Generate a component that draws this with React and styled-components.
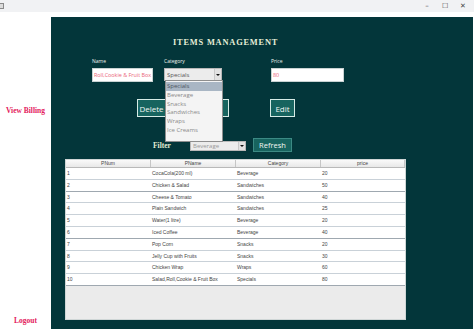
import React from 'react';
import styled, { createGlobalStyle } from 'styled-components';

const GlobalStyle = createGlobalStyle`
  * { box-sizing: border-box; }
  html, body { margin: 0; padding: 0; background: #fff; }
  body { width: 474px; height: 329px; overflow: hidden; font-family: "Open Sans", "Noto Sans", sans-serif; }
`;

const categories = ['Specials', 'Beverage', 'Snacks', 'Sandwiches', 'Wraps', 'Ice Creams'];

const items = [
  [1, 'CocaCola(200 ml)', 'Beverage', 20],
  [2, 'Chicken & Salad', 'Sandwiches', 50],
  [3, 'Cheese & Tomato', 'Sandwiches', 40],
  [4, 'Plain Sandwich', 'Sandwiches', 25],
  [5, 'Water(1 litre)', 'Beverage', 20],
  [6, 'Iced Coffee', 'Beverage', 40],
  [7, 'Pop Corn', 'Snacks', 20],
  [8, 'Jelly Cup with Fruits', 'Snacks', 30],
  [9, 'Chicken Wrap', 'Wraps', 60],
  [10, 'Salad,Roll,Cookie & Fruit Box', 'Specials', 80],
];

// Window frame
const Window = styled.div`
  width: 474px;
  height: 329px;
  display: flex;
  flex-direction: column;
`;

const TitleBar = styled.div`
  height: 12px;
  background: #f1f2f4;
  display: flex;
  align-items: center;
  justify-content: space-between;
  padding-right: 8px;
`;

const AppIcon = styled.div`
  width: 4px;
  height: 6px;
  border: 1px solid #8a8a8a;
  border-left: none;
  background: #dcdcdc;
`;

const Controls = styled.div`
  display: flex;
  gap: 12px;
  align-items: center;
  color: #444;
  font-family: "DejaVu Sans", sans-serif;
  font-size: 7px;
`;

const Control = styled.span`
  width: 6px;
  text-align: center;
`;

const Body = styled.div`
  flex: 1;
  display: flex;
  padding-top: 5px;
  padding-right: 1px;
  min-height: 0;
`;

const Sidebar = styled.div`
  width: 51px;
  display: flex;
  flex-direction: column;
  align-items: center;
`;

const SideLink = styled.div`
  font-family: "Liberation Serif", serif;
  font-weight: bold;
  font-size: 7.5px;
  color: #e3205c;
  margin-top: ${(p) => p.$top}px;
  white-space: nowrap;
`;

const Panel = styled.div`
  flex: 1;
  background: #03363a;
  display: flex;
  flex-direction: column;
  padding-top: 21px;
`;

const Title = styled.div`
  height: 10px;
  padding-left: 122px;
  font-family: "Liberation Serif", serif;
  font-weight: bold;
  font-size: 8.4px;
  letter-spacing: 0.8px;
  line-height: 10px;
  color: #e6eed8;
  white-space: nowrap;
`;

const FormRow = styled.div`
  display: flex;
  margin-top: 10px;
  padding-left: 41px;
`;

const Field = styled.div`
  width: ${(p) => p.$w}px;
  margin-right: ${(p) => p.$gap || 0}px;
  position: relative;
`;

const Label = styled.div`
  height: 7px;
  font-size: 5px;
  line-height: 7px;
  color: #eef2ee;
  margin-bottom: 3px;
`;

const TextInput = styled.div`
  height: 14px;
  background: #fff;
  border: 1px solid #c9d3d3;
  font-size: 5.4px;
  line-height: 12px;
  color: #ea6378;
  padding-left: 1px;
  white-space: nowrap;
  overflow: hidden;
`;

const Combo = styled.div`
  height: ${(p) => p.$h || 13}px;
  margin-top: ${(p) => p.$mt || 0}px;
  width: ${(p) => p.$w || 58}px;
  background: #ececec;
  border: 1px solid #b8b8b8;
  display: flex;
  align-items: center;
  font-size: 6px;
  color: ${(p) => p.$faint ? '#9a9a9a' : '#555'};
  padding-left: 2px;
  position: relative;
`;

const ComboText = styled.span`
  flex: 1;
  white-space: nowrap;
  overflow: hidden;
`;

const Arrow = styled.div`
  width: 7px;
  height: 100%;
  border-left: 1px solid #c8c8c8;
  background: #e2e2e2;
  display: flex;
  align-items: center;
  justify-content: center;
  &::after {
    content: '';
    border-left: 2px solid transparent;
    border-right: 2px solid transparent;
    border-top: 2.5px solid #111;
  }
`;

const DropList = styled.div`
  position: absolute;
  left: 0;
  top: 100%;
  width: 58px;
  height: 62px;
  background: #f4f4f4;
  border: 1px solid #8e8e8e;
  z-index: 5;
  padding-top: 1px;
`;

const DropItem = styled.div`
  height: 8.8px;
  line-height: 8.8px;
  font-size: 6px;
  padding-left: 1px;
  color: ${(p) => (p.$active ? '#4b5560' : '#8a8a8a')};
  background: ${(p) => (p.$active ? '#a9b6c4' : 'transparent')};
`;

const ButtonRow = styled.div`
  display: flex;
  margin-top: 17px;
  padding-left: 86px;
  height: 18px;
`;

const Button = styled.div`
  width: ${(p) => p.$w}px;
  height: ${(p) => p.$h || 18}px;
  margin-left: ${(p) => p.$ml || 0}px;
  margin-right: ${(p) => p.$gap || 0}px;
  background: #17645f;
  border: 1px solid ${(p) => p.$soft ? '#3c8a84' : '#d7ebe6'};
  color: #f2f7f2;
  font-size: ${(p) => p.$fs || 8}px;
  display: flex;
  align-items: center;
  justify-content: center;
  white-space: nowrap;
`;

const FilterRow = styled.div`
  display: flex;
  align-items: flex-start;
  margin-top: 21px;
  padding-left: 102px;
  height: 14px;
`;

const FilterLabel = styled.div`
  font-family: "Liberation Serif", serif;
  font-weight: bold;
  font-size: 7.5px;
  color: #e2ecd4;
  width: 37px;
  margin-top: 3px;
`;

const Table = styled.div`
  margin: 7px 0 0 14px;
  width: 341px;
  height: 161px;
  background: #ebebeb;
  border: 1px solid #cfd6d6;
  display: flex;
  flex-direction: column;
`;

const HeadRow = styled.div`
  display: grid;
  grid-template-columns: 85px 85px 85px 84px;
  height: 8px;
  background: linear-gradient(#fafafa, #e8e8e8);
  border-bottom: 1px solid #b9b9b9;
`;

const HeadCell = styled.div`
  font-family: "Liberation Sans", sans-serif;
  font-size: 5px;
  line-height: 7px;
  color: #444;
  text-align: center;
  border-right: 1px solid #c6c6c6;
`;

const Row = styled.div`
  display: grid;
  grid-template-columns: 85px 85px 85px 84px;
  height: 11.8px;
  background: #fff;
  border-bottom: 1px solid ${(p) => (p.$strong ? '#9fa8b0' : '#c9d1d8')};
`;

const Cell = styled.div`
  font-family: "Liberation Sans", sans-serif;
  font-size: 5px;
  line-height: 10.8px;
  color: #444;
  padding-left: 1px;
  white-space: nowrap;
  overflow: hidden;
`;

export default function App() {
  return (
    <Window>
      <GlobalStyle />
      <TitleBar>
        <AppIcon />
        <Controls>
          <Control>–</Control>
          <Control>☐</Control>
          <Control>✕</Control>
        </Controls>
      </TitleBar>
      <Body>
        <Sidebar>
          <SideLink $top={89}>View Billing</SideLink>
          <SideLink $top={201}>Logout</SideLink>
        </Sidebar>
        <Panel>
          <Title>ITEMS MANAGEMENT</Title>
          <FormRow>
            <Field $w={61} $gap={11}>
              <Label>Name</Label>
              <TextInput>Roll,Cookie &amp; Fruit Box</TextInput>
            </Field>
            <Field $w={58} $gap={49}>
              <Label>Category</Label>
              <Combo $mt={1}>
                <ComboText>Specials</ComboText>
                <Arrow />
                <DropList>
                  {categories.map((c, i) => (
                    <DropItem key={c} $active={i === 0}>{c}</DropItem>
                  ))}
                </DropList>
              </Combo>
            </Field>
            <Field $w={73}>
              <Label>Price</Label>
              <TextInput>80</TextInput>
            </Field>
          </FormRow>
          <ButtonRow>
            <Button $w={29} $gap={30}>Delete</Button>
            <Button $w={33} $gap={41}>Add</Button>
            <Button $w={25}>Edit</Button>
          </ButtonRow>
          <FilterRow>
            <FilterLabel>Filter</FilterLabel>
            <Combo $w={56} $h={10} $mt={3} $faint>
              <ComboText>Beverage</ComboText>
              <Arrow />
            </Combo>
            <Button $w={39} $h={14} $fs={7.5} $ml={7} $soft>Refresh</Button>
          </FilterRow>
          <Table>
            <HeadRow>
              <HeadCell>PNum</HeadCell>
              <HeadCell>PName</HeadCell>
              <HeadCell>Category</HeadCell>
              <HeadCell>price</HeadCell>
            </HeadRow>
            {items.map(([n, name, cat, price]) => (
              <Row key={n} $strong={n === 2 || n === 6 || n === 10}>
                <Cell>{n}</Cell>
                <Cell>{name}</Cell>
                <Cell>{cat}</Cell>
                <Cell>{price}</Cell>
              </Row>
            ))}
          </Table>
        </Panel>
      </Body>
    </Window>
  );
}
